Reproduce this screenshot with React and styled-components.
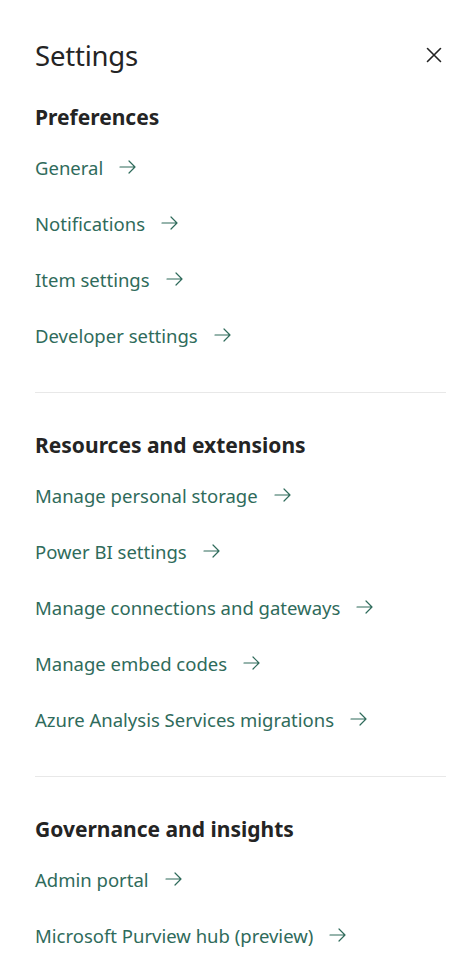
import React from 'react';
import styled, { createGlobalStyle } from 'styled-components';

const Global = createGlobalStyle`
  body {
    margin: 0;
    background: #ffffff;
    font-family: "Noto Sans", "Open Sans", sans-serif;
  }
`;

const sections = [
  {
    title: 'Preferences',
    links: ['General', 'Notifications', 'Item settings', 'Developer settings'],
  },
  {
    title: 'Resources and extensions',
    links: [
      'Manage personal storage',
      'Power BI settings',
      'Manage connections and gateways',
      'Manage embed codes',
      'Azure Analysis Services migrations',
    ],
  },
  {
    title: 'Governance and insights',
    links: ['Admin portal', 'Microsoft Purview hub (preview)'],
  },
];

const Panel = styled.div`
  width: 474px;
  height: 957px;
  box-sizing: border-box;
  padding: 35px 28px 0 35px;
  overflow: hidden;
`;

const Header = styled.div`
  display: flex;
  align-items: center;
  justify-content: space-between;
  height: 40px;
`;

const Title = styled.h1`
  margin: 0;
  font-size: 27.5px;
  font-weight: 400;
  color: #242424;
  letter-spacing: -0.2px;
`;

const CloseButton = styled.button`
  border: none;
  background: none;
  padding: 0;
  width: 24px;
  height: 24px;
  display: flex;
  align-items: center;
  justify-content: center;
  cursor: pointer;
`;

const Section = styled.section`
  padding-top: ${(p) => (p.first ? '28px' : '38px')};
  padding-bottom: 44px;
  border-bottom: ${(p) => (p.last ? 'none' : '1px solid #e8e8e8')};
`;

const Heading = styled.h2`
  margin: 0 0 23px;
  font-size: 21px;
  font-weight: 700;
  color: #242424;
  line-height: 28px;
`;

const LinkList = styled.ul`
  list-style: none;
  margin: 0;
  padding: 0;
  display: flex;
  flex-direction: column;
  gap: 30px;
`;

const LinkItem = styled.li`
  display: flex;
  align-items: center;
  gap: 16px;
  height: 26px;
  font-size: 18.5px;
  color: #2f6b5b;
  cursor: pointer;
`;

const Arrow = () => (
  <svg width="18" height="16" viewBox="0 0 18 16" fill="none">
    <path d="M1 8h15M10 2l6 6-6 6" stroke="#2f6b5b" strokeWidth="1.2" strokeLinecap="round" strokeLinejoin="round" />
  </svg>
);

const App = () => {
  return (
    <Panel>
      <Global />
      <Header>
        <Title>Settings</Title>
        <CloseButton aria-label="Close">
          <svg width="16" height="16" viewBox="0 0 16 16">
            <path d="M1.5 1.5l13 13M14.5 1.5l-13 13" stroke="#242424" strokeWidth="1.6" strokeLinecap="round" />
          </svg>
        </CloseButton>
      </Header>
      {sections.map((s, i) => (
        <Section key={s.title} first={i === 0} last={i === sections.length - 1}>
          <Heading>{s.title}</Heading>
          <LinkList>
            {s.links.map((l) => (
              <LinkItem key={l}>
                {l}
                <Arrow />
              </LinkItem>
            ))}
          </LinkList>
        </Section>
      ))}
    </Panel>
  );
};

export default App;
